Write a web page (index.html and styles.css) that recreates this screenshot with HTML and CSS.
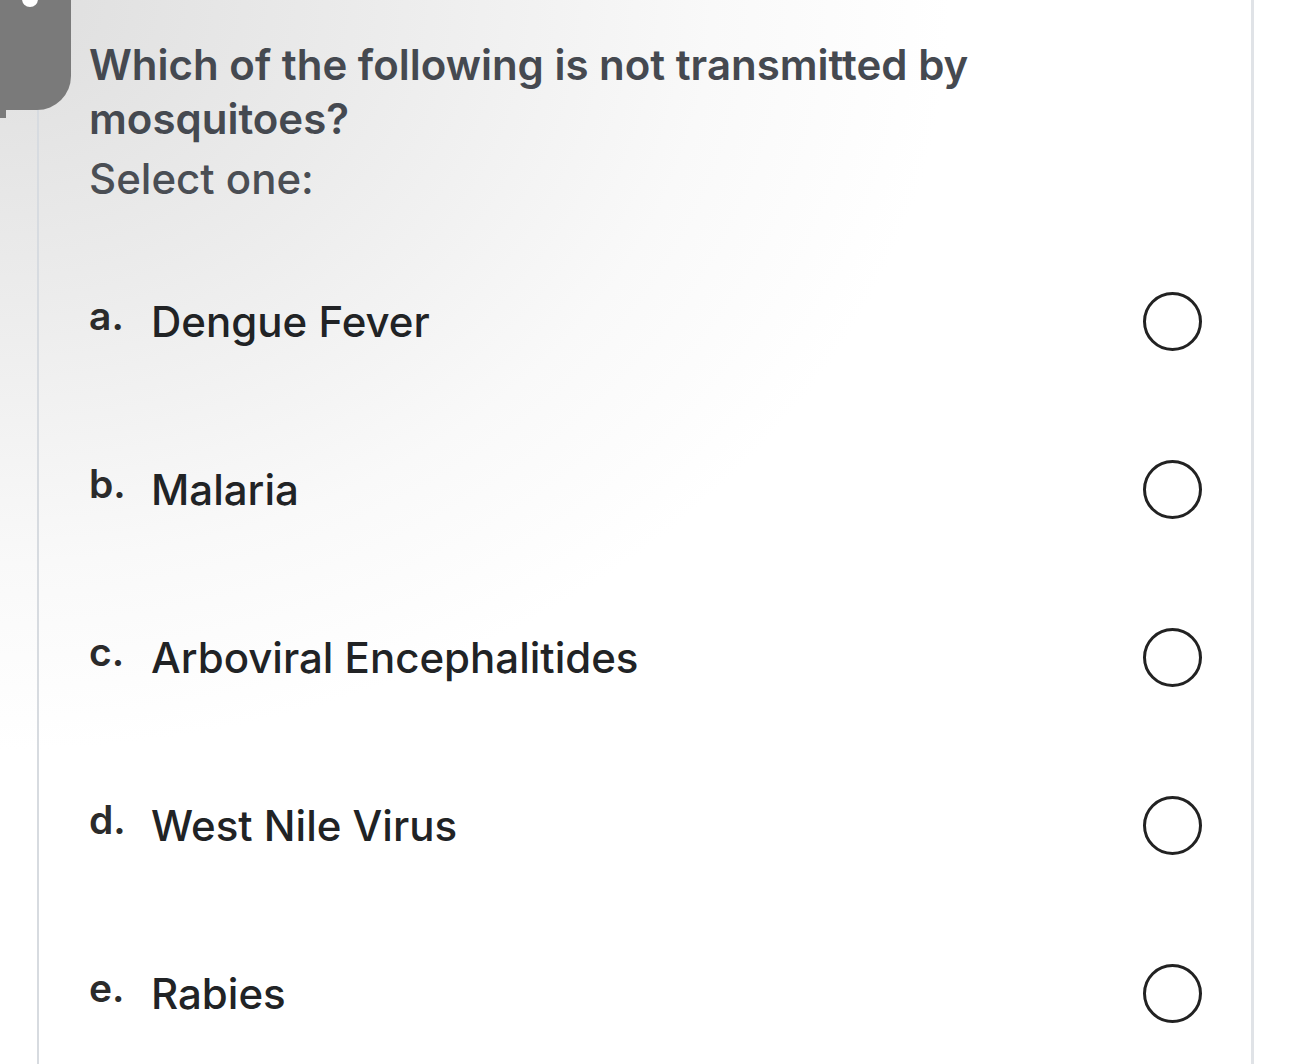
FILE: index.html
```html
<!DOCTYPE html>
<html>
<head>
<meta charset="utf-8">
<link rel="stylesheet" href="styles.css">
</head>
<body>
<div class="flag"><span class="flag-dot"></span></div>
<div class="panel">
  <div class="question">
    <p class="qtext">Which of the following is not transmitted by mosquitoes?</p>
    <p class="prompt">Select one:</p>
  </div>
  <div class="answers">
    <div class="option">
      <span class="letter">a.</span>
      <span class="label">Dengue Fever</span>
      <span class="radio"></span>
    </div>
    <div class="option">
      <span class="letter">b.</span>
      <span class="label">Malaria</span>
      <span class="radio"></span>
    </div>
    <div class="option">
      <span class="letter">c.</span>
      <span class="label">Arboviral Encephalitides</span>
      <span class="radio"></span>
    </div>
    <div class="option">
      <span class="letter">d.</span>
      <span class="label">West Nile Virus</span>
      <span class="radio"></span>
    </div>
    <div class="option">
      <span class="letter">e.</span>
      <span class="label">Rabies</span>
      <span class="radio"></span>
    </div>
  </div>
</div>
</body>
</html>
```
FILE: styles.css
```css
html, body {
  margin: 0;
  padding: 0;
  height: 100%;
}
body {
  font-family: Inter, "Noto Sans", sans-serif;
  background: radial-gradient(ellipse 950px 750px at 0 0, #dedede 0%, #ececec 40%, #f9f9f9 75%, #ffffff 100%);
  overflow: hidden;
  position: relative;
}
.flag {
  position: absolute;
  left: 0;
  top: 0;
  width: 71px;
  height: 110px;
  background: #7a7a7a;
  border-bottom-right-radius: 34px;
  z-index: 2;
}
.flag::after {
  content: "";
  position: absolute;
  left: 0;
  top: 100%;
  width: 6px;
  height: 8px;
  background: #7a7a7a;
}
.flag-dot {
  position: absolute;
  left: 22px;
  top: -9px;
  width: 16px;
  height: 16px;
  border-radius: 50%;
  background: #ffffff;
}
.panel {
  margin-left: 37px;
  width: 1217px;
  height: 100%;
  border-left: 2px solid #d7dbe0;
  border-right: 3px solid #e0e3e7;
  box-sizing: border-box;
  padding: 38px 49px 0 50px;
}
.question p {
  margin: 0;
}
.qtext {
  font-size: 42px;
  font-weight: 600;
  line-height: 54px;
  color: #454950;
  max-width: 920px;
}
.prompt {
  margin-top: 6px !important;
  font-size: 42px;
  font-weight: 500;
  line-height: 54px;
  color: #4a4e54;
}
.answers {
  margin-top: 31px;
  display: flex;
  flex-direction: column;
}
.option {
  height: 168px;
  display: flex;
  align-items: center;
}
.letter {
  width: 62px;
  font-size: 39px;
  font-weight: 600;
  color: #2b2b2b;
  position: relative;
  top: -6px;
}
.label {
  flex: 1;
  font-size: 42px;
  font-weight: 500;
  color: #212325;
}
.radio {
  width: 53px;
  height: 53px;
  border: 3px solid #222222;
  border-radius: 50%;
}
```
